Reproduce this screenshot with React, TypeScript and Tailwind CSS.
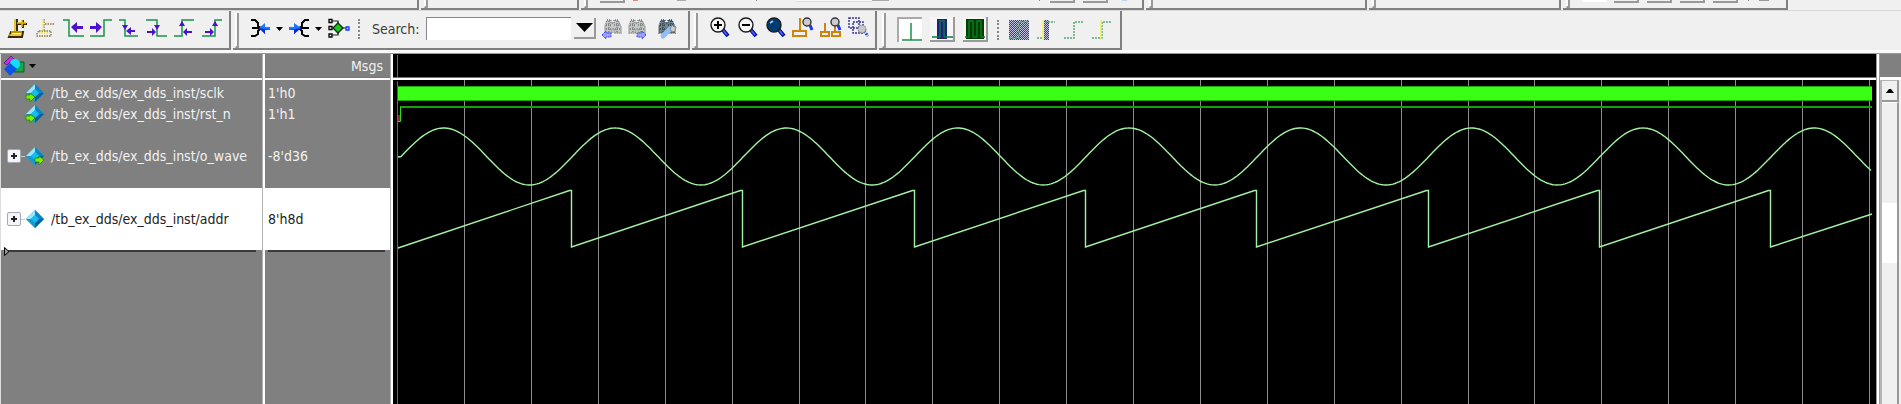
import React from 'react';
import clsx from 'clsx';

interface IconProps {
  children: React.ReactNode;
  className?: string;
}

const Icon: React.FC<IconProps> = ({ children, className }) => (
  <svg className={clsx('h-[22px] w-[22px] shrink-0', className)} viewBox="0 0 22 22" fill="none" aria-hidden="true">
    {children}
  </svg>
);

const ToolButton: React.FC<{ label: string; className?: string; children: React.ReactNode }> = ({
  label,
  className,
  children,
}) => (
  <button type="button" aria-label={label} className={clsx('flex shrink-0 items-center justify-center', className)}>
    {children}
  </button>
);

const Handle: React.FC = () => (
  <div className="w-[4px] shrink-0 self-stretch border-r-2 border-b-2 border-l border-r-[#999] border-b-[#999] border-l-white bg-[#f8f8f8]" />
);

const Dots: React.FC<{ className?: string }> = ({ className }) => (
  <div className={clsx('h-5 shrink-0 border-l-2 border-dotted border-[#888]', className)} />
);

const Caret: React.FC = () => (
  <svg className="h-1 w-[7px]" viewBox="0 0 7 4" aria-hidden="true">
    <path d="M0 0h7L3.5 4z" fill="#000" />
  </svg>
);

const GREEN = '#17934a';
const VIOLET = '#4a12cf';

/* Cursor icons */
const CursorIcon: React.FC<{ dashed?: boolean }> = ({ dashed }) => (
  <Icon>
    {dashed ? (
      <g stroke="#8a7a30" strokeWidth={1.3} strokeDasharray="1.5 1">
        <path d="M9 1v12M10 6h9M4 13h12v5H2v-3z" />
        <path d="M8 1v12M4 15h11" stroke="#ffe040" />
      </g>
    ) : (
      <g stroke="#3a2c00" strokeWidth={2}>
        <path d="M10 1v13M11 6h9M16 2v8M4 14h12l-1 5H2z" />
        <path d="M8 1v12M10 5h9M15 2v7M4 14h11M2 17h12" stroke="#e8b800" strokeWidth={1.5} />
      </g>
    )}
  </Icon>
);

const edgePaths: Record<string, string> = {
  fallWide: 'M1 2h6v16h15',
  riseWide: 'M0 18h14V2h8',
  fallLeft: 'M1 2h6v16h13',
  fallRight: 'M0 2h11v16h10',
  riseLeft: 'M1 18h8V2h12',
  riseRight: 'M1 18h13V2h7',
};

const arrowPaths: Record<string, string> = {
  fallWide: 'M9 9l6-5v4h6v3h-6v4z',
  riseWide: 'M12 9L6 4v4H0v3h6v4z',
  fallLeft: 'M4 7h6l-3 5zM8 13l5-4v3h4v2h-4v3z',
  fallRight: 'M8 7h6l-3 5zM10 14L6 10v3H1v2h5v3z',
  riseLeft: 'M6 8h6L9 3zM10 14l4-4v3h5v2h-5v3z',
  riseRight: 'M11 8h6l-3-5zM13 14l-4-4v3H4v2h5v3z',
};

const EdgeIcon: React.FC<{ kind: string }> = ({ kind }) => (
  <Icon>
    <path d={edgePaths[kind]} stroke={GREEN} strokeWidth={1.5} />
    <path d={arrowPaths[kind]} fill={VIOLET} />
  </Icon>
);

const DriverIcon: React.FC<{ reverse?: boolean }> = ({ reverse }) => (
  <Icon>
    {reverse ? (
      <>
        <path d="M20 2h-4l-3 3v3l-3 2h10M10 10l3 3v3l3 2h4" stroke="#000" strokeWidth={2} />
        <path d="M0 9h5V5l7 5-7 6v-4H0z" fill="#127bff" />
        <path d="M0 12h5v4l7-6z" fill="#0524e8" />
      </>
    ) : (
      <>
        <path d="M1 2h4l3 3v3l3 2H2M11 10l-3 3v3l-3 2H1" stroke="#000" strokeWidth={2} />
        <path d="M20 9h-5V5l-6 5 6 6v-4h5z" fill="#127bff" />
        <path d="M20 12h-5v4l-6-6z" fill="#0524e8" />
      </>
    )}
  </Icon>
);

const ConnectIcon: React.FC = () => (
  <Icon>
    <path d="M3 3h7v14H3M4 10h15" stroke="#222" strokeWidth={1.2} />
    <path d="M1 1.500h3v3H1zM1 8.500h3v3H1zM1 16h3v3H1z" fill="#fff" stroke="#000" strokeWidth={1.3} />
    <path d="M10 5l5 5-5 5-5-5z" fill="#17c81d" stroke="#032b04" strokeWidth={1.3} />
    <path d="M18 9h3v3h-3z" fill="#b8dcff" stroke="#1436ff" strokeWidth={1.3} />
  </Icon>
);

const BinocularsIcon: React.FC<{ arrow?: 'left' | 'right' }> = ({ arrow }) => {
  const dark = arrow ? '#777' : '#30404c';
  return (
    <Icon>
      <path d="M6 2h4v3h3V2h4l3 7v6h-7v-4h-2v4H4V8z" fill={arrow ? '#c4c8c8' : '#71818c'} />
      <path
        d="M6 2h4v3h3V2h4l3 7v6h-7v-4h-2v4H4V8zM5 7h5M13 7h6M5 11h5M14 11h5M8 3v11M16 3v11"
        stroke={dark}
        strokeWidth={1.4}
        strokeDasharray="1 1"
      />
      {arrow === 'left' && <path d="M1 17l4-4v2h5v4H5v2z" fill="#9aa4ff" stroke="#3b3bff" strokeDasharray="2 1" />}
      {arrow === 'right' && <path d="M21 17l-4-4v2h-5v4h5v2z" fill="#9aa4ff" stroke="#3b3bff" strokeDasharray="2 1" />}
      {!arrow && (
        <>
          <path d="M8 18l7-7" stroke="#8fbdf5" strokeWidth={5} strokeLinecap="round" />
          <path d="M15 11l2-4 2 2 2 0-1 4-3 1z" fill="#ccc" stroke="#888" />
        </>
      )}
    </Icon>
  );
};

const ZoomIcon: React.FC<{ kind: 'in' | 'out' | 'full' }> = ({ kind }) => (
  <Icon>
    <path d="M14 13l5 6" stroke="#0a0a90" strokeWidth={4} />
    <path d="M14 13l4 5" stroke="#3f5cff" strokeWidth={2} />
    <circle cx={9} cy={8} r={7} fill={kind === 'full' ? '#003b73' : '#f6f6f6'} stroke="#1b1b1b" strokeWidth={1.4} />
    {kind !== 'full' && <path d="M5 8h8" stroke="#000" strokeWidth={2} />}
    {kind === 'in' && <path d="M9 4v8" stroke="#000" strokeWidth={2} />}
    {kind === 'full' && <path d="M5 6l3-2" stroke="#9fc8ee" strokeWidth={2} />}
  </Icon>
);

const ZoomCursorIcon: React.FC<{ double?: boolean }> = ({ double }) => (
  <Icon>
    <path
      d={double ? 'M5 6v9M1 15h8v4H1zM15 6v9M12 15h8v4h-8z' : 'M8 1v13M1 14h13v5H1z'}
      stroke="#ce850a"
      strokeWidth={2}
    />
    <path d="M18 8l2 5" stroke="#1b31ff" strokeWidth={3} />
    <circle cx={15} cy={5} r={4} fill="#ccc" stroke="#333" strokeWidth={1.4} />
  </Icon>
);

const ZoomAreaIcon: React.FC = () => (
  <Icon>
    <path d="M1 1h10v10H1zM5 5h10v11H5z" stroke="#303098" strokeWidth={1.4} strokeDasharray="2 1" />
    <path d="M16 14l4 5" stroke="#2e4be0" strokeWidth={3} strokeDasharray="2 1" />
    <circle cx={14} cy={12} r={4} fill="#c8c8c8" stroke="#777" strokeDasharray="2 1" />
  </Icon>
);

const ToggleFace: React.FC<{ kind: 'cursor' | 'blue' | 'green' }> = ({ kind }) => (
  <svg className="h-[22px] w-[22px]" viewBox="0 0 22 22" fill="none" aria-hidden="true">
    {kind === 'cursor' && <path d="M11 3v17M2 20h20" stroke={GREEN} strokeWidth={1.5} />}
    {kind === 'blue' && (
      <>
        <path d="M6 1h10v20H6z" fill="#20207e" />
        <path d="M1 19h8V3h4v16h9" stroke="#0a7a43" strokeWidth={1.5} />
      </>
    )}
    {kind === 'green' && (
      <>
        <path d="M2 1h18v20H2z" fill="#003d00" />
        <path d="M1 19h4V3h4v16h4V3h4v16h4" stroke="#087c20" strokeWidth={1.5} />
      </>
    )}
  </svg>
);

const MutedEdgeIcon: React.FC<{ kind: 'block' | 'half' | 'edge' | 'marker' }> = ({ kind }) => (
  <Icon>
    <defs>
      <pattern id="checker" width={2} height={2} patternUnits="userSpaceOnUse">
        <path d="M0 0h2v2H0z" fill="#c3c3df" />
        <path d="M0 0h1v1H0zM1 1h1v1H1z" fill="#39398f" />
      </pattern>
    </defs>
    {kind === 'block' && <path d="M1 1h20v20H1z" fill="url(#checker)" />}
    {kind === 'half' && <path d="M8 1h5v20H8z" fill="url(#checker)" />}
    {kind === 'half' ? (
      <path d="M1 19h5M9 3h10" stroke="#54a878" strokeWidth={1.5} strokeDasharray="2 1" />
    ) : (
      <path d="M1 19h10V3h9" stroke="#54a878" strokeWidth={1.5} strokeDasharray="2 1" />
    )}
    {kind === 'half' && <path d="M7 1v20" stroke="#f4f43c" strokeWidth={1.3} />}
    {kind === 'marker' && <path d="M10 1v20" stroke="#f4f43c" strokeWidth={1.3} />}
  </Icon>
);

/* Bottom edge of the upper toolbar row */
const Stub: React.FC<{ className: string }> = ({ className }) => <div className={clsx('shrink-0', className)} />;

const raisedStub = 'h-[3px] border-r-2 border-b-2 border-[#999]';

const UpperGroup: React.FC<{ className: string; children?: React.ReactNode; handle?: boolean }> = ({
  className,
  children,
  handle = true,
}) => (
  <div className={clsx('flex shrink-0 border-r-2 border-b-2 border-[#808080]', className)}>
    {handle && (
      <div className="ml-[3px] flex h-2">
        <Handle />
      </div>
    )}
    {children}
  </div>
);

const UpperToolbar: React.FC = () => (
  <div className="flex h-[10px] gap-[2px] overflow-hidden">
    <UpperGroup className="w-[419px]" handle={false} />
    <UpperGroup className="w-[158px]" />
    <UpperGroup className="w-[563px]">
      <Stub className={clsx(raisedStub, 'ml-[12px] w-[25px]')} />
      <Stub className="ml-[8px] h-px w-[5px] bg-[#d88]" />
      <Stub className="ml-[39px] h-px w-[9px] bg-[#aaa]" />
      <Stub className="ml-[70px] h-px w-px bg-[#888]" />
      <Stub className="ml-[39px] h-[2px] w-[76px] border-b border-[#ddd] bg-[#f8f8f8]" />
      <Stub className="h-px w-[17px] bg-[#aaa]" />
      <Stub className="ml-[150px] h-px w-px bg-[#888]" />
      <Stub className={clsx(raisedStub, 'ml-[10px] w-[25px]')} />
      <Stub className={clsx(raisedStub, 'ml-[8px] w-[25px]')} />
      <Stub className="ml-[14px] h-px w-[5px] bg-[#bcd0f0]" />
    </UpperGroup>
    <UpperGroup className="w-[221px]" />
    <UpperGroup className="w-[192px]" />
    <UpperGroup className="w-[225px]">
      <Stub className="ml-[12px] h-[2px] w-[24px] bg-white" />
      <Stub className={clsx(raisedStub, 'ml-[8px] w-[25px]')} />
      <Stub className={clsx(raisedStub, 'ml-[8px] w-[25px]')} />
      <Stub className={clsx(raisedStub, 'ml-[8px] w-[25px]')} />
      <Stub className={clsx(raisedStub, 'ml-[8px] w-[25px]')} />
      <Stub className="ml-[10px] h-px w-px bg-[#888]" />
      <Stub className="ml-[10px] h-px w-[10px] bg-[#999]" />
    </UpperGroup>
  </div>
);

const groupClass = 'flex shrink-0 border-r-2 border-b-2 border-[#808080]';

const Toolbar: React.FC = () => (
  <div className="flex h-10 gap-[2px] border-t border-[#d8d8d8]">
    <div className={clsx(groupClass, 'w-[231px] items-start justify-between pt-[7px] pr-[6px] pl-[7px]')}>
      <ToolButton label="Insert cursor"><CursorIcon /></ToolButton>
      <ToolButton label="Delete cursor"><CursorIcon dashed /></ToolButton>
      <ToolButton label="Find previous transition"><EdgeIcon kind="fallWide" /></ToolButton>
      <ToolButton label="Find next transition"><EdgeIcon kind="riseWide" /></ToolButton>
      <ToolButton label="Previous falling edge"><EdgeIcon kind="fallLeft" /></ToolButton>
      <ToolButton label="Next falling edge"><EdgeIcon kind="fallRight" /></ToolButton>
      <ToolButton label="Previous rising edge"><EdgeIcon kind="riseLeft" /></ToolButton>
      <ToolButton label="Next rising edge"><EdgeIcon kind="riseRight" /></ToolButton>
    </div>

    <div className={clsx(groupClass, 'w-[457px] items-start pl-[2px]')}>
      <div className="flex h-[37px] pt-[2px]"><Handle /></div>
      <div className="flex items-center pt-[6px]">
        <ToolButton label="Trace drivers" className="ml-[11px] gap-1"><DriverIcon /><Caret /></ToolButton>
        <ToolButton label="Trace readers" className="ml-[6px] gap-1"><DriverIcon reverse /><Caret /></ToolButton>
        <ToolButton label="Show connectivity" className="ml-[6px]"><ConnectIcon /></ToolButton>
        <Dots className="ml-[8px]" />
        <label htmlFor="search" className="ml-[12px] w-[54px] leading-5 text-[#3c3c3c]">Search:</label>
        <input
          id="search"
          type="text"
          className="h-[23px] w-[145px] border-t border-l border-[#888] bg-white px-1 outline-none"
        />
        <ToolButton label="Search history" className="ml-[3px] h-[21px] w-[22px] border-r-2 border-b-2 border-[#999] bg-[#f0f0f0]">
          <svg className="h-[9px] w-[17px]" viewBox="0 0 17 9" aria-hidden="true">
            <path d="M0 0h17L8.500 9z" fill="#000" />
          </svg>
        </ToolButton>
        <ToolButton label="Search backward" className="ml-[5px]"><BinocularsIcon arrow="left" /></ToolButton>
        <ToolButton label="Search forward" className="ml-[2px]"><BinocularsIcon arrow="right" /></ToolButton>
        <ToolButton label="Search options" className="ml-[8px]"><BinocularsIcon /></ToolButton>
      </div>
    </div>

    <div className={clsx(groupClass, 'w-[185px] items-start pl-[2px]')}>
      <div className="flex h-[37px] pt-[2px]"><Handle /></div>
      <div className="flex flex-1 justify-between pt-[6px] pr-[5px] pl-[11px]">
        <ToolButton label="Zoom in"><ZoomIcon kind="in" /></ToolButton>
        <ToolButton label="Zoom out"><ZoomIcon kind="out" /></ToolButton>
        <ToolButton label="Zoom full"><ZoomIcon kind="full" /></ToolButton>
        <ToolButton label="Zoom on cursor"><ZoomCursorIcon /></ToolButton>
        <ToolButton label="Zoom between cursors"><ZoomCursorIcon double /></ToolButton>
        <ToolButton label="Zoom area"><ZoomAreaIcon /></ToolButton>
      </div>
    </div>

    <div className={clsx(groupClass, 'w-[243px] items-start pl-[3px]')}>
      <div className="flex h-[37px] pt-[2px]"><Handle /></div>
      <div className="flex items-center pt-[6px]">
        <ToolButton label="Cursor mode" className="ml-[11px] h-[25px] w-[25px] border-t-2 border-l-2 border-[#aaa] bg-white">
          <ToggleFace kind="cursor" />
        </ToolButton>
        <ToolButton label="Edit mode" className="ml-[8px] h-[25px] w-[25px] border-r-2 border-b-2 border-[#999] bg-[#f6f6f6]">
          <ToggleFace kind="blue" />
        </ToolButton>
        <ToolButton label="Clock mode" className="ml-[8px] h-[25px] w-[25px] border-r-2 border-b-2 border-[#999] bg-[#f6f6f6]">
          <ToggleFace kind="green" />
        </ToolButton>
        <Dots className="ml-[9px]" />
        <ToolButton label="Select region" className="ml-[9px]"><MutedEdgeIcon kind="block" /></ToolButton>
        <ToolButton label="Insert pulse" className="ml-[6px]"><MutedEdgeIcon kind="half" /></ToolButton>
        <ToolButton label="Invert edge" className="ml-[5px]"><MutedEdgeIcon kind="edge" /></ToolButton>
        <ToolButton label="Move edge" className="ml-[6px]"><MutedEdgeIcon kind="marker" /></ToolButton>
      </div>
    </div>
  </div>
);

/* Signal list */
interface Signal {
  name: string;
  value: string;
  port?: 'in' | 'out';
  expandable?: boolean;
  selected?: boolean;
  height: string;
}

const signals: Signal[] = [
  { name: '/tb_ex_dds/ex_dds_inst/sclk', value: "1'h0", port: 'in', height: 'h-[21px]' },
  { name: '/tb_ex_dds/ex_dds_inst/rst_n', value: "1'h1", port: 'in', height: 'h-[21px]' },
  { name: '/tb_ex_dds/ex_dds_inst/o_wave', value: "-8'd36", port: 'out', expandable: true, height: 'h-[64px]' },
  { name: '/tb_ex_dds/ex_dds_inst/addr', value: "8'h8d", expandable: true, selected: true, height: 'h-[62px]' },
];

const SignalIcon: React.FC<{ port?: 'in' | 'out' }> = ({ port }) => (
  <svg className="h-5 w-5 shrink-0" viewBox="0 0 20 20" aria-hidden="true">
    <path d="M10 1l9 9-9 9-9-9z" fill="#0a9fe0" />
    <path d="M10 1v5L6 10H1z" fill="#9be6fb" />
    <path d="M10 1l9 9h-5l-4-4z" fill="#0b86c4" />
    <path d="M1 10h5l4 4v5z" fill="#159bd2" />
    <path d="M19 10h-5l-4 4v5z" fill="#035e99" />
    <path d="M10 6l4 4-4 4-4-4z" fill="#13bdf2" />
    {port === 'in' && <path d="M1 12h4v-2l5 4-5 5v-3H1z" fill="#7df000" stroke="#23830a" strokeWidth={0.8} />}
    {port === 'out' && <path d="M10 12h4v-2l5 4-5 5v-3h-4z" fill="#7df000" stroke="#23830a" strokeWidth={0.8} />}
  </svg>
);

const NameRow: React.FC<{ signal: Signal }> = ({ signal }) => (
  <li
    className={clsx(
      'flex items-center pl-[6px]',
      signal.height,
      signal.selected ? 'bg-white text-[#222]' : 'text-[#f2f2f2]'
    )}
  >
    {signal.expandable ? (
      <>
        <button
          type="button"
          aria-label={`Expand ${signal.name}`}
          className="flex h-[14px] w-[14px] items-center justify-center rounded-xs border border-[#a4a9b8] bg-[#f4f5fb]"
        >
          <svg className="h-[6px] w-[6px]" viewBox="0 0 6 6" aria-hidden="true">
            <path d="M0 2h6v2H0zM2 0h2v6H2z" fill="#222" />
          </svg>
        </button>
        <div className="h-px w-[4px] bg-[#ccc]" />
      </>
    ) : (
      <div className="w-[18px]" />
    )}
    <SignalIcon port={signal.port} />
    <span className="ml-[6px] whitespace-nowrap">{signal.name}</span>
  </li>
);

const SignalPane: React.FC = () => (
  <section aria-label="Signals" className="flex w-[262px] shrink-0 flex-col border-l border-[#ddd]">
    <header className="flex h-[23px] items-center bg-[#808080] pl-[2px]">
      <button type="button" aria-label="Wave options" className="flex items-center gap-1">
        <svg className="h-[22px] w-[22px]" viewBox="0 0 22 22" aria-hidden="true">
          <path d="M1 8l7-7 6 6-3 3-4-3-3 3z" fill="#c62be8" stroke="#641076" strokeWidth={0.8} />
          <path d="M11 17V12l6-5h4v10z" fill="#19a54c" stroke="#0b5c26" />
          <circle cx={12} cy={9} r={5} fill="#12dfff" />
          <path d="M7 8l7 6-7 7-6-7z" fill="#0a55e8" />
        </svg>
        <Caret />
      </button>
    </header>
    <div className="h-[3px] border-t border-[#777] bg-white" />
    <div className="flex-1 bg-[#808080] pt-[2px]">
      <ul>
        {signals.map((s) => (
          <NameRow key={s.name} signal={s} />
        ))}
      </ul>
      <div className="relative mr-[6px] ml-[3px] h-[2px] bg-[#3a3a3a]">
        <svg className="absolute -top-[3px] left-0 h-[9px] w-[6px]" viewBox="0 0 6 9" aria-hidden="true">
          <path d="M0.500 0.500v8L5 4.500z" fill="#999" stroke="#000" />
        </svg>
      </div>
    </div>
  </section>
);

const ValuePane: React.FC = () => (
  <section aria-label="Values" className="flex w-[125px] shrink-0 flex-col">
    <header className="h-[23px] bg-[#808080] pr-[7px] text-right leading-6 text-[#f2f2f2]">Msgs</header>
    <div className="h-[3px] border-t border-[#777] bg-white" />
    <div className="flex-1 bg-[#808080] pt-[2px]">
      <ul>
        {signals.map((s) => (
          <li
            key={s.name}
            className={clsx(
              'flex items-center pl-[3px]',
              s.height,
              s.selected ? 'bg-white text-[#222]' : 'text-[#f2f2f2]'
            )}
          >
            {s.value}
          </li>
        ))}
      </ul>
      <div className="mr-[5px] ml-[3px] h-[2px] bg-[#3a3a3a]" />
    </div>
  </section>
);

const PaneSplit: React.FC = () => <div className="w-[3px] shrink-0 border-l border-[#b0b0b0] bg-white" />;

/* Waveforms */
const WAVE_END = 1479;
const PERIOD = 171.3;
const FIRST_DROP = 178.5;

const gridLines = Array.from({ length: 22 }, (_, i) => Math.round(71 + i * 66.9));

const sinePath = () => {
  let d = 'M5 77';
  for (let x = 8; x <= WAVE_END; x += 2) {
    const y = 76.5 - 28.5 * Math.sin(((x - 8) / PERIOD) * 2 * Math.PI);
    d += `L${x} ${y.toFixed(1)}`;
  }
  return d;
};

const rampPath = () => {
  let d = 'M5 168';
  for (let i = 0; i < 8; i++) {
    const x = Math.floor(FIRST_DROP + i * PERIOD) + 0.5;
    d += `L${x - 2} 110.5H${x}V167`;
  }
  return `${d}L${WAVE_END} 134`;
};

const WavePane: React.FC = () => (
  <section aria-label="Waveforms" className="flex min-w-0 flex-1 flex-col bg-black">
    <div className="h-[23px] pt-px pl-[4px]">
      <div className="h-full w-px bg-[#4f7a50]" />
    </div>
    <div className="h-[3px] border-t border-[#777] bg-white" />
    <svg className="min-h-0 w-full flex-1" fill="none" role="img" aria-label="Signal waveforms">
      <g fill="#8c8c8c">
        {gridLines.map((x) => (
          <rect key={x} x={x} y={0} width={1} height="100%" />
        ))}
      </g>
      <rect x={4} y={1} width={1} height="100%" fill="#4f7a50" />
      <rect x={5} y={6} width={1474} height={15} fill="#1fa40a" />
      <rect x={5} y={7} width={1474} height={13} fill="#39ff14" />
      <rect x={4} y={6} width={1} height={15} fill="#a33a3a" />
      <rect x={5} y={35} width={2} height={6} fill="#8a2038" />
      <rect x={7} y={26} width={1472} height={2} fill="#1c9c0b" />
      <path d="M5 41.500h2.500V27" stroke="#2be010" />
      <path d={sinePath()} stroke="#a2f2a2" strokeWidth={1.4} />
      <path d={rampPath()} stroke="#a2f2a2" strokeWidth={1.4} />
    </svg>
  </section>
);

const ScrollColumn: React.FC = () => (
  <div className="flex w-[21px] shrink-0 flex-col bg-[#f0f0f0]">
    <div className="h-[23px] bg-[#808080]" />
    <div className="h-[3px] bg-white" />
    <div className="flex flex-1 flex-col border-l-2 border-[#b4b4b4] pr-[2px]">
      <button
        type="button"
        aria-label="Scroll up"
        className="flex h-[22px] items-center justify-center border-t border-r-2 border-b-2 border-t-[#b4b4b4] border-r-[#999] border-b-[#999] bg-[#f0f0f0]"
      >
        <svg className="h-1 w-2" viewBox="0 0 8 4" aria-hidden="true">
          <path d="M0 4l3-4h2l3 4z" fill="#000" />
        </svg>
      </button>
      <div className="flex-1 border-t border-r-2 border-t-white border-r-[#999] pt-[100px]">
        <div className="h-[60px] bg-white" />
      </div>
    </div>
  </div>
);

const App: React.FC = () => (
  <div className="flex h-screen flex-col overflow-hidden bg-[#f0f0f0] font-['DejaVu_Sans_Condensed','DejaVu_Sans',sans-serif] text-sm">
    <UpperToolbar />
    <Toolbar />
    <div className="h-1 shrink-0 border-b border-[#999] bg-[#fafafa]" />
    <main className="flex min-h-0 flex-1">
      <SignalPane />
      <PaneSplit />
      <ValuePane />
      <PaneSplit />
      <WavePane />
      <div className="w-1 shrink-0 border-r border-l border-[#999] bg-white" />
      <ScrollColumn />
    </main>
  </div>
);

export default App;
